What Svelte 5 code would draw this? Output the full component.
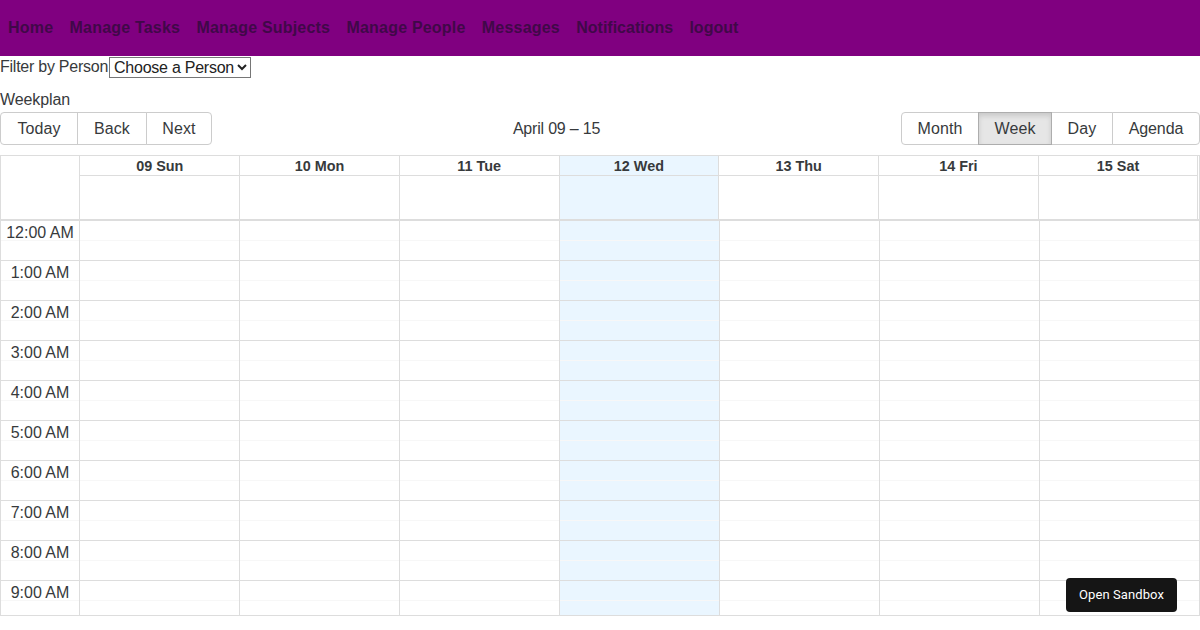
<script>
  const navItems = ['Home', 'Manage Tasks', 'Manage Subjects', 'Manage People', 'Messages', 'Notifications', 'logout'];
  const days = ['09 Sun', '10 Mon', '11 Tue', '12 Wed', '13 Thu', '14 Fri', '15 Sat'];
  const hours = ['12:00 AM', '1:00 AM', '2:00 AM', '3:00 AM', '4:00 AM', '5:00 AM', '6:00 AM', '7:00 AM', '8:00 AM', '9:00 AM'];
  const todayIndex = 3;
</script>

<nav class="nav">
  {#each navItems as item}
    <span class="nav-link">{item}</span>
  {/each}
</nav>

<div class="filter">
  <label for="person">Filter by Person</label><select id="person"><option>Choose a Person</option></select>
</div>

<div class="title">Weekplan</div>

<div class="toolbar">
  <div class="btn-group">
    <span class="btn today-btn">Today</span><span class="btn back-btn">Back</span><span class="btn next-btn">Next</span>
  </div>
  <div class="label">April 09 – 15</div>
  <div class="btn-group">
    <span class="btn month-btn">Month</span><span class="btn week-btn active">Week</span><span class="btn day-btn">Day</span><span class="btn agenda-btn">Agenda</span>
  </div>
</div>

<div class="calendar">
  <div class="head">
    <div class="corner"></div>
    {#each days as day, i}
      <div class="head-col" class:today={i === todayIndex}>
        <div class="head-label">{day}</div>
        <div class="allday"></div>
      </div>
    {/each}
  </div>
  <div class="body">
    <div class="gutter">
      {#each hours as hour}
        <div class="group gutter-group"><div class="slot gutter-slot">{hour}</div><div class="slot"></div></div>
      {/each}
    </div>
    {#each days as day, i}
      <div class="col" class:today={i === todayIndex}>
        {#each hours as hour}
          <div class="group"><div class="slot"></div><div class="slot"></div></div>
        {/each}
      </div>
    {/each}
  </div>
</div>

<div class="sandbox">Open Sandbox</div>

<style>
  :global(body) {
    margin: 0;
    font-family: "Liberation Sans", Arial, sans-serif;
    font-size: 16px;
    color: #373a3c;
    background: #fff;
    overflow: hidden;
  }
  .nav {
    height: 56px;
    background: #800080;
    display: flex;
    align-items: center;
    gap: 16.3px;
    padding: 0 8px;
    box-sizing: border-box;
  }
  .nav-link {
    font-weight: 700;
    color: #400848;
    line-height: 20px;
    letter-spacing: 0.2px;
  }
  .nav-link:nth-child(6) {
    letter-spacing: 0;
  }
  .nav-link:nth-child(7) {
    letter-spacing: 0;
  }
  .filter {
    height: 22px;
    display: flex;
    align-items: center;
    line-height: 20px;
    letter-spacing: -0.25px;
  }
  .filter select {
    font: 16px "Liberation Sans", Arial, sans-serif;
    letter-spacing: -0.25px;
    color: #222;
    background: #fff;
    margin: 0 0 0 1px;
  }
  .title {
    margin-top: 12px;
    line-height: 20px;
    height: 22px;
    letter-spacing: -0.1px;
  }
  .toolbar {
    height: 33px;
    display: flex;
    justify-content: space-between;
    align-items: center;
    margin-bottom: 10px;
  }
  .label {
    flex: 1;
    text-align: center;
    padding: 0 10px;
    letter-spacing: -0.2px;
  }
  .btn-group {
    display: flex;
    height: 33px;
  }
  .btn {
    box-sizing: border-box;
    height: 33px;
    line-height: 31px;
    text-align: center;
    border: 1px solid #ccc;
    margin-left: -1px;
    color: #373a3c;
    background: #fff;
    letter-spacing: 0.1px;
  }
  .today-btn { width: 78px; }
  .back-btn { width: 70px; }
  .next-btn { width: 66px; }
  .month-btn { width: 78px; }
  .week-btn { width: 74px; }
  .day-btn { width: 62px; }
  .agenda-btn { width: 88px; letter-spacing: -0.1px; }
  .btn:first-child {
    margin-left: 0;
    border-radius: 4px 0 0 4px;
  }
  .btn:last-child {
    border-radius: 0 4px 4px 0;
  }
  .btn.active {
    background: #e6e6e6;
    border-color: #adadad;
    box-shadow: inset 0 3px 5px rgba(0, 0, 0, 0.125);
    position: relative;
  }
  .calendar {
    box-sizing: border-box;
    height: 461px;
    border: 1px solid #ddd;
    display: flex;
    flex-direction: column;
    overflow: hidden;
  }
  .head {
    display: flex;
    height: 63px;
    flex: none;
    padding-right: 0.6px;
  }
  .corner {
    width: 78.4px;
    flex: none;
  }
  .head-col {
    flex: 1;
    min-width: 0;
    box-sizing: border-box;
    border-left: 1px solid #ddd;
    display: flex;
    flex-direction: column;
  }
  .head-col:last-child {
    border-right: 1px solid #ddd;
  }
  .head-label {
    height: 20px;
    box-sizing: border-box;
    border-bottom: 1px solid #ddd;
    font-size: 14.4px;
    font-weight: 700;
    text-align: center;
    line-height: 20px;
    color: #373a3c;
  }
  .allday {
    flex: 1;
  }
  .today {
    background: #eaf6ff;
  }
  .body {
    flex: 1;
    display: flex;
    min-height: 0;
    border-top: 2px solid #ddd;
    overflow: hidden;
  }
  .gutter {
    width: 78px;
    flex: none;
  }
  .col {
    width: 160px;
    flex: none;
    box-sizing: border-box;
    border-left: 1px solid #ddd;
  }
  .group {
    height: 40px;
    box-sizing: border-box;
    border-bottom: 1px solid #ddd;
    flex: none;
  }
  .gutter-group .slot {
    border: 0;
  }
  .slot {
    height: 20px;
    box-sizing: border-box;
  }
  .slot:first-child {
    border-bottom: 1px solid #f7f7f7;
  }
  .gutter-slot {
    padding: 0 5px;
    text-align: center;
    white-space: nowrap;
    line-height: 24px;
    color: #373a3c;
  }
  .sandbox {
    position: fixed;
    left: 1066px;
    top: 578px;
    width: 111px;
    height: 34px;
    box-sizing: border-box;
    background: #151515;
    color: #fff;
    border-radius: 4px;
    font-family: Roboto, sans-serif;
    font-size: 13px;
    line-height: 34px;
    letter-spacing: 0.1px;
    text-align: center;
  }
</style>
